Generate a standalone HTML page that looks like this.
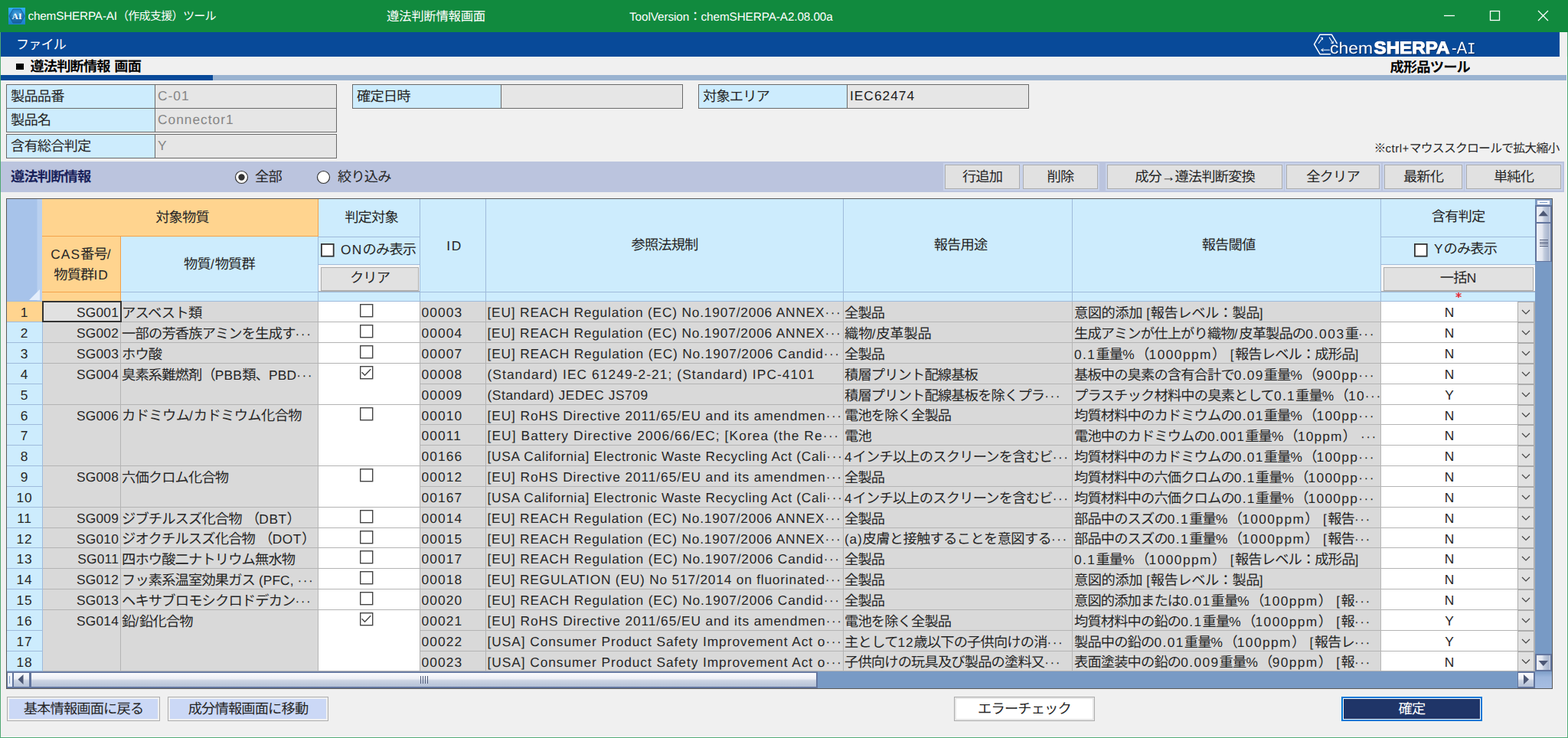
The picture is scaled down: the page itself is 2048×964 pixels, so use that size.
<!DOCTYPE html>
<html lang="ja"><head><meta charset="utf-8"><title>chemSHERPA-AI</title>
<style>
html,body{margin:0;padding:0;}
body{width:2048px;height:964px;overflow:hidden;position:relative;background:#f0f0f0;text-rendering:geometricPrecision;
 font-family:"Liberation Sans","Noto Sans CJK JP",sans-serif;font-size:17.33px;color:#262626;}
div{position:absolute;box-sizing:border-box;white-space:nowrap;overflow:hidden;}
svg{position:absolute;overflow:visible;}
.t{font-size:17.33px;}
.c{text-align:center;}
.r{text-align:right;}
.b{font-weight:bold;}
.el{letter-spacing:1.5px;}
.j{position:relative;display:inline-block;font-family:"Liberation Sans","Noto Sans CJK JP",sans-serif;font-size:18.3px;letter-spacing:-0.049em;text-align:justify;text-align-last:justify;white-space:nowrap;}
.lat{letter-spacing:0.75px;}
.btn{background:#e1e1e1;border:1px solid #adadad;text-align:center;}
.lbl{background:#cdecfd;border:1px solid #6a6a6a;padding-left:5px;font-size:17.33px;}
.val{background:#e6e6e6;border:1px solid #6a6a6a;padding-left:3px;font-size:17.33px;color:#7a7a7a;}
.cb{background:#fff;border:1px solid #4a4a4a;}
.dd{background:#e1e1e1;border:1px solid #adadad;}
</style></head><body>

<div style="left:0px;top:0px;width:2048px;height:42px;background:#118a3e;"></div>
<svg style="left:11px;top:10px" width="22" height="22" viewBox="0 0 22 22">
<defs><linearGradient id="ig" x1="0" y1="0" x2="0" y2="1"><stop offset="0" stop-color="#2fb0f3"/><stop offset="1" stop-color="#1c7fcc"/></linearGradient>
<linearGradient id="ih" x1="0" y1="0" x2="0" y2="1"><stop offset="0" stop-color="#2c8fd3"/><stop offset="1" stop-color="#17619f"/></linearGradient></defs>
<rect width="22" height="22" fill="url(#ig)"/>
<polygon points="1,11 6,2 16,2 21,11 16,20 6,20" fill="url(#ih)" stroke="#175c97" stroke-width="1"/>
<polygon points="4,11 7.5,5 14.5,5 18,11" fill="#4aa6e2" opacity="0.55"/>
<text x="11" y="15" font-family="Liberation Serif" font-weight="bold" font-size="11" fill="#fff" text-anchor="middle" textLength="13" lengthAdjust="spacingAndGlyphs">AI</text>
</svg>
<div class="t" style="left:36.5px;top:10px;width:420px;height:24px;line-height:24px;color:#fff;font-size:15.3px;"><span style="letter-spacing:-0.18px">chemSHERPA-AI</span><span class="j" style="width:129.0px;font-size:15.05px">（作成支援）ツール</span></div>
<div class="t" style="left:505px;top:10px;width:200px;height:24px;line-height:24px;color:#fff;font-size:15.6px;"><span class="j" style="width:128.5px;font-size:16.47px">遵法判断情報画面</span></div>
<div class="t" style="left:822px;top:10px;width:400px;height:24px;line-height:24px;color:#fff;font-size:15.3px;"><span style="letter-spacing:-0.09px">ToolVersion</span><span class="j" style="width:15.4px;font-size:16.16px">：</span><span style="letter-spacing:-0.09px">chemSHERPA-A2.08.00a</span></div>
<svg style="left:1880px;top:8px" width="150" height="26" viewBox="0 0 150 26" fill="none" stroke="#fff" stroke-width="1.3">
<path d="M6 12.5H20"/><rect x="66.5" y="6.5" width="12" height="12"/><path d="M129 6L142 19M142 6L129 19"/></svg>
<div style="left:1px;top:42px;width:2036px;height:32px;background:#084a99;"></div>
<div class="t" style="left:21px;top:45px;width:120px;height:26px;line-height:26px;color:#fff;"><span class="j" style="width:65.0px;font-size:17.06px">ファイル</span></div>
<svg style="left:1700px;top:40px" width="240" height="40" viewBox="1700 40 240 40">
<g fill="none" stroke="#fff" stroke-width="1.5" stroke-linejoin="round" stroke-linecap="round">
<path d="M1737.5 70.7H1724L1716.5 57.8L1724 45.2H1739.3L1746.2 56.6"/>
<path d="M1722.3 56.5L1727.5 49.5M1736.3 49L1741 56.5M1736.5 65.3H1726" stroke-width="1.1"/>
<path d="M1725.2 49.2L1727.6 49.3L1727.4 51.8M1741.3 54L1741.1 56.6L1738.6 56.2M1728.2 63.6L1725.8 65.3L1728.2 67" stroke-width="1"/>
</g>
<g fill="#fff" font-family="Liberation Sans" style="filter:drop-shadow(1px 1px 0.4px #082a60)">
<text x="1737" y="70" font-size="21" textLength="56" lengthAdjust="spacingAndGlyphs">chem</text>
<text x="1794.5" y="70" font-size="22.5" font-weight="bold" stroke="#fff" stroke-width="1.1" textLength="99" lengthAdjust="spacingAndGlyphs">SHERPA</text>
<text x="1896" y="70" font-size="22" textLength="31.5" lengthAdjust="spacingAndGlyphs">-A<tspan font-family="Liberation Mono" font-size="21">I</tspan></text></g>
</svg>
<div style="left:21px;top:83px;width:10px;height:8px;background:#000"></div>
<div class="t b" style="left:39.5px;top:74px;width:300px;height:25px;line-height:25px;color:#000;"><span class="j jb" style="width:104.2px;font-size:18.23px">遵法判断情報</span><span style="letter-spacing:0.80px"> </span><span class="j jb" style="width:34.7px;font-size:18.23px">画面</span></div>
<div class="t b r" style="left:1780px;top:75px;width:140px;height:25px;line-height:25px;color:#000;"><span class="j jb" style="width:104.5px">成形品ツール</span></div>
<div style="left:1px;top:98px;width:277px;height:7px;background:#084a99;"></div>
<div style="left:278px;top:98px;width:1769px;height:7px;background:#9ab3d0;"></div>
<div class="lbl" style="left:8px;top:110px;width:195px;height:32px;line-height:32px;line-height:29px;"><span class="j" style="width:69.6px">製品品番</span></div>
<div class="val" style="left:202px;top:110px;width:238px;height:32px;line-height:32px;color:#858585;line-height:29px;"><span style="letter-spacing:1.00px">C-01</span></div>
<div class="lbl" style="left:8px;top:141px;width:195px;height:32px;line-height:32px;line-height:29px;"><span class="j" style="width:52.2px">製品名</span></div>
<div class="val" style="left:202px;top:141px;width:238px;height:32px;line-height:32px;color:#858585;line-height:29px;"><span style="letter-spacing:1.00px">Connector1</span></div>
<div class="lbl" style="left:8px;top:175px;width:195px;height:32px;line-height:32px;line-height:29px;"><span class="j" style="width:104.4px">含有総合判定</span></div>
<div class="val" style="left:202px;top:175px;width:238px;height:32px;line-height:32px;color:#858585;line-height:29px;"><span style="letter-spacing:1.00px">Y</span></div>
<div class="lbl" style="left:460px;top:110px;width:195px;height:32px;line-height:32px;line-height:29px;"><span class="j" style="width:69.6px">確定日時</span></div>
<div class="val" style="left:654px;top:110px;width:238px;height:32px;line-height:32px;color:#858585;line-height:29px;"></div>
<div class="lbl" style="left:912px;top:110px;width:195px;height:32px;line-height:32px;line-height:29px;"><span class="j" style="width:87.0px">対象エリア</span></div>
<div class="val" style="left:1106px;top:110px;width:238px;height:32px;line-height:32px;color:#1c1c1c;line-height:29px;"><span style="letter-spacing:1.00px">IEC62474</span></div>
<div class="t r" style="left:1700px;top:184px;width:336.5px;height:22px;line-height:22px;font-size:15px;"><span class="j" style="width:15.1px;font-size:15.84px">※</span><span style="letter-spacing:0.48px">ctrl+</span><span class="j" style="width:195.8px;font-size:15.84px">マウススクロールで拡大縮小</span></div>
<div style="left:1px;top:211px;width:2042px;height:40px;background:#bbc4de;"></div>
<div class="t b" style="left:14px;top:218px;width:200px;height:25px;line-height:25px;color:#18215a;"><span class="j jb" style="width:104.4px">遵法判断情報</span></div>
<svg style="left:306px;top:222px" width="130" height="19" viewBox="0 0 130 19">
<circle cx="9.5" cy="9.5" r="8" fill="#fff" stroke="#333" stroke-width="1.2"/><circle cx="9.5" cy="9.5" r="4.2" fill="#333"/>
<circle cx="116.5" cy="9.5" r="8" fill="#fff" stroke="#333" stroke-width="1.2"/></svg>
<div class="t" style="left:333px;top:218px;width:60px;height:25px;line-height:25px;"><span class="j" style="width:34.8px">全部</span></div>
<div class="t" style="left:441px;top:218px;width:100px;height:25px;line-height:25px;"><span class="j" style="width:69.6px">絞り込み</span></div>
<div style="left:1232px;top:213px;width:102px;height:36px;background:#c9d3ea;"></div>
<div class="t btn" style="left:1234px;top:215px;width:98px;height:32px;line-height:32px;line-height:30px;"><span class="j" style="width:52.2px">行追加</span></div>
<div style="left:1334px;top:213px;width:102px;height:36px;background:#c9d3ea;"></div>
<div class="t btn" style="left:1336px;top:215px;width:98px;height:32px;line-height:32px;line-height:30px;"><span class="j" style="width:34.8px">削除</span></div>
<div style="left:1444px;top:213px;width:233px;height:36px;background:#c9d3ea;"></div>
<div class="t btn" style="left:1446px;top:215px;width:229px;height:32px;line-height:32px;line-height:30px;"><span class="j" style="width:156.6px">成分→遵法判断変換</span></div>
<div style="left:1678px;top:213px;width:126px;height:36px;background:#c9d3ea;"></div>
<div class="t btn" style="left:1680px;top:215px;width:122px;height:32px;line-height:32px;line-height:30px;"><span class="j" style="width:69.6px">全クリア</span></div>
<div style="left:1806px;top:213px;width:106px;height:36px;background:#c9d3ea;"></div>
<div class="t btn" style="left:1808px;top:215px;width:102px;height:32px;line-height:32px;line-height:30px;"><span class="j" style="width:52.2px">最新化</span></div>
<div style="left:1913px;top:213px;width:128px;height:36px;background:#c9d3ea;"></div>
<div class="t btn" style="left:1915px;top:215px;width:124px;height:32px;line-height:32px;line-height:30px;"><span class="j" style="width:52.2px">単純化</span></div>
<div style="left:8px;top:259px;width:2020px;height:641px;background:#7a9bc4;border:1px solid #5a5a5a;"></div>
<div style="left:9px;top:260px;width:1996px;height:134px;background:#cdecfd;"></div>
<div style="left:9px;top:260px;width:46px;height:134px;background:linear-gradient(90deg,#a7c3ea 0,#a7c3ea 39px,#b9d0ef 40px);"></div>
<svg style="left:38px;top:378px" width="14" height="14"><polygon points="14,0 14,14 0,14" fill="#e4eefb"/></svg>
<div style="left:55px;top:260px;width:361px;height:49px;background:#ffd48f;border-right:1px solid #f3a24a;border-bottom:1px solid #f3a24a;"></div>
<div style="left:55px;top:309px;width:103px;height:85px;background:#ffd48f;border-right:1px solid #f3a24a;"></div>
<div style="left:55px;top:381px;width:102px;height:1px;background:#f3a24a;"></div>
<div style="left:548px;top:260px;width:1px;height:134px;background:#9fbbdb;"></div>
<div style="left:634px;top:260px;width:1px;height:134px;background:#9fbbdb;"></div>
<div style="left:1101px;top:260px;width:1px;height:134px;background:#9fbbdb;"></div>
<div style="left:1400px;top:260px;width:1px;height:134px;background:#9fbbdb;"></div>
<div style="left:1803px;top:260px;width:1px;height:134px;background:#9fbbdb;"></div>
<div style="left:415px;top:309px;width:1px;height:85px;background:#9fbbdb;"></div>
<div style="left:158px;top:381px;width:1847px;height:1px;background:#9fbbdb;"></div>
<div style="left:9px;top:393px;width:1996px;height:1px;background:#9fbbdb;"></div>
<div style="left:416px;top:309px;width:132px;height:1px;background:#9fbbdb;"></div>
<div style="left:416px;top:345px;width:132px;height:1px;background:#9fbbdb;"></div>
<div style="left:1804px;top:309px;width:201px;height:1px;background:#9fbbdb;"></div>
<div style="left:1804px;top:345px;width:201px;height:1px;background:#9fbbdb;"></div>
<div class="t c" style="left:57px;top:270px;width:362px;height:28px;line-height:28px;"><span class="j" style="width:69.6px">対象物質</span></div>
<div class="t c" style="left:55px;top:318px;width:102px;height:28px;line-height:28px;"><span style="letter-spacing:1.00px">CAS</span><span class="j" style="width:34.8px">番号</span><span style="letter-spacing:1.00px">/</span></div>
<div class="t c" style="left:55px;top:345px;width:102px;height:28px;line-height:28px;"><span class="j" style="width:52.2px">物質群</span><span style="letter-spacing:1.00px">ID</span></div>
<div class="t c" style="left:158px;top:331px;width:257px;height:28px;line-height:28px;"><span class="j" style="width:34.8px">物質</span><span style="letter-spacing:1.00px">/</span><span class="j" style="width:52.2px">物質群</span></div>
<div class="t c" style="left:418px;top:270px;width:134px;height:28px;line-height:28px;"><span class="j" style="width:69.6px">判定対象</span></div>
<svg style="left:419.3px;top:318px" width="18" height="18" fill="#fff" stroke="#333" stroke-width="1.8"><rect x="0.9" y="0.9" width="15.8" height="15.8"/></svg>
<div class="t" style="left:445px;top:312px;width:103px;height:28px;line-height:28px;"><span style="letter-spacing:1.30px">ON</span><span class="j" style="width:69.6px">のみ表示</span></div>
<div style="left:416px;top:346px;width:132px;height:35px;background:#f6f6f6;border-bottom:1px solid #b0b0b0;"></div>
<div class="t btn" style="left:419px;top:349px;width:128px;height:31px;line-height:31px;line-height:25px;"><span class="j" style="width:52.2px">クリア</span></div>
<div class="t c" style="left:551px;top:307px;width:85px;height:28px;line-height:28px;letter-spacing:1.5px;">ID</div>
<div class="t c" style="left:635px;top:306px;width:466px;height:28px;line-height:28px;"><span class="j" style="width:87.0px">参照法規制</span></div>
<div class="t c" style="left:1104px;top:306px;width:301px;height:28px;line-height:28px;"><span class="j" style="width:69.6px">報告用途</span></div>
<div class="t c" style="left:1403px;top:306px;width:403px;height:28px;line-height:28px;"><span class="j" style="width:69.6px">報告閾値</span></div>
<div class="t c" style="left:1804px;top:269px;width:201px;height:28px;line-height:28px;"><span class="j" style="width:69.6px">含有判定</span></div>
<svg style="left:1847.3px;top:318px" width="18" height="18" fill="#fff" stroke="#333" stroke-width="1.8"><rect x="0.9" y="0.9" width="15.8" height="15.8"/></svg>
<div class="t" style="left:1873px;top:311px;width:120px;height:28px;line-height:28px;"><span style="letter-spacing:1.00px">Y</span><span class="j" style="width:69.6px">のみ表示</span></div>
<div style="left:1804px;top:346px;width:201px;height:35px;background:#f6f6f6;border-bottom:1px solid #b0b0b0;"></div>
<div class="t btn" style="left:1807px;top:349px;width:196px;height:31px;line-height:31px;line-height:25px;"><span class="j" style="width:34.8px">一括</span><span style="letter-spacing:1.00px">N</span></div>
<svg style="left:1900px;top:381px" width="10" height="9" viewBox="0 0 10 9" stroke="#e8202a" stroke-width="1.4"><path d="M5 1V8M1.5 2.5L8.5 6.5M8.5 2.5L1.5 6.5"/></svg>
<div style="left:9px;top:394px;width:46px;height:483px;background:#cdecfd;"></div>
<div style="left:55px;top:394px;width:360px;height:483px;background:#d9d9d9;"></div>
<div style="left:415px;top:394px;width:133px;height:483px;background:#fff;"></div>
<div style="left:548px;top:394px;width:1255px;height:483px;background:#d9d9d9;"></div>
<div style="left:1803px;top:394px;width:202px;height:483px;background:#fff;"></div>
<div style="left:9px;top:394px;width:47px;height:27px;background:#ffd48f;border-right:1px solid #f3a24a;"></div>
<div style="left:55px;top:421px;width:1px;height:456px;background:#9fbbdb;"></div>
<div style="left:157px;top:394px;width:1px;height:483px;background:#b4b4b4;"></div>
<div style="left:415px;top:394px;width:1px;height:483px;background:#b4b4b4;"></div>
<div style="left:548px;top:394px;width:1px;height:483px;background:#b4b4b4;"></div>
<div style="left:634px;top:394px;width:1px;height:483px;background:#b4b4b4;"></div>
<div style="left:1101px;top:394px;width:1px;height:483px;background:#b4b4b4;"></div>
<div style="left:1400px;top:394px;width:1px;height:483px;background:#b4b4b4;"></div>
<div style="left:1803px;top:394px;width:1px;height:483px;background:#b4b4b4;"></div>
<div style="left:2004px;top:394px;width:1px;height:483px;background:#b4b4b4;"></div>
<div style="left:9px;top:420px;width:46px;height:1px;background:#9fbbdb;"></div>
<div style="left:548px;top:420px;width:1457px;height:1px;background:#b4b4b4;"></div>
<div style="left:9px;top:447px;width:46px;height:1px;background:#9fbbdb;"></div>
<div style="left:548px;top:447px;width:1457px;height:1px;background:#b4b4b4;"></div>
<div style="left:9px;top:474px;width:46px;height:1px;background:#9fbbdb;"></div>
<div style="left:548px;top:474px;width:1457px;height:1px;background:#b4b4b4;"></div>
<div style="left:9px;top:501px;width:46px;height:1px;background:#9fbbdb;"></div>
<div style="left:548px;top:501px;width:1457px;height:1px;background:#b4b4b4;"></div>
<div style="left:9px;top:528px;width:46px;height:1px;background:#9fbbdb;"></div>
<div style="left:548px;top:528px;width:1457px;height:1px;background:#b4b4b4;"></div>
<div style="left:9px;top:554px;width:46px;height:1px;background:#9fbbdb;"></div>
<div style="left:548px;top:554px;width:1457px;height:1px;background:#b4b4b4;"></div>
<div style="left:9px;top:581px;width:46px;height:1px;background:#9fbbdb;"></div>
<div style="left:548px;top:581px;width:1457px;height:1px;background:#b4b4b4;"></div>
<div style="left:9px;top:608px;width:46px;height:1px;background:#9fbbdb;"></div>
<div style="left:548px;top:608px;width:1457px;height:1px;background:#b4b4b4;"></div>
<div style="left:9px;top:635px;width:46px;height:1px;background:#9fbbdb;"></div>
<div style="left:548px;top:635px;width:1457px;height:1px;background:#b4b4b4;"></div>
<div style="left:9px;top:662px;width:46px;height:1px;background:#9fbbdb;"></div>
<div style="left:548px;top:662px;width:1457px;height:1px;background:#b4b4b4;"></div>
<div style="left:9px;top:689px;width:46px;height:1px;background:#9fbbdb;"></div>
<div style="left:548px;top:689px;width:1457px;height:1px;background:#b4b4b4;"></div>
<div style="left:9px;top:715px;width:46px;height:1px;background:#9fbbdb;"></div>
<div style="left:548px;top:715px;width:1457px;height:1px;background:#b4b4b4;"></div>
<div style="left:9px;top:742px;width:46px;height:1px;background:#9fbbdb;"></div>
<div style="left:548px;top:742px;width:1457px;height:1px;background:#b4b4b4;"></div>
<div style="left:9px;top:769px;width:46px;height:1px;background:#9fbbdb;"></div>
<div style="left:548px;top:769px;width:1457px;height:1px;background:#b4b4b4;"></div>
<div style="left:9px;top:796px;width:46px;height:1px;background:#9fbbdb;"></div>
<div style="left:548px;top:796px;width:1457px;height:1px;background:#b4b4b4;"></div>
<div style="left:9px;top:823px;width:46px;height:1px;background:#9fbbdb;"></div>
<div style="left:548px;top:823px;width:1457px;height:1px;background:#b4b4b4;"></div>
<div style="left:9px;top:850px;width:46px;height:1px;background:#9fbbdb;"></div>
<div style="left:548px;top:850px;width:1457px;height:1px;background:#b4b4b4;"></div>
<div style="left:9px;top:876px;width:46px;height:1px;background:#9fbbdb;"></div>
<div style="left:548px;top:876px;width:1457px;height:1px;background:#b4b4b4;"></div>
<div style="left:56px;top:420px;width:492px;height:1px;background:#b4b4b4;"></div>
<div style="left:56px;top:447px;width:492px;height:1px;background:#b4b4b4;"></div>
<div style="left:56px;top:474px;width:492px;height:1px;background:#b4b4b4;"></div>
<div style="left:56px;top:528px;width:492px;height:1px;background:#b4b4b4;"></div>
<div style="left:56px;top:608px;width:492px;height:1px;background:#b4b4b4;"></div>
<div style="left:56px;top:662px;width:492px;height:1px;background:#b4b4b4;"></div>
<div style="left:56px;top:689px;width:492px;height:1px;background:#b4b4b4;"></div>
<div style="left:56px;top:715px;width:492px;height:1px;background:#b4b4b4;"></div>
<div style="left:56px;top:742px;width:492px;height:1px;background:#b4b4b4;"></div>
<div style="left:56px;top:769px;width:492px;height:1px;background:#b4b4b4;"></div>
<div style="left:56px;top:796px;width:492px;height:1px;background:#b4b4b4;"></div>
<div style="left:56px;top:876px;width:492px;height:1px;background:#b4b4b4;"></div>
<div class="t c" style="left:9px;top:395px;width:46px;height:27px;line-height:27px;letter-spacing:0.8px;">1</div>
<div class="t r" style="left:57px;top:395px;width:98px;height:27px;line-height:27px;"><span style="letter-spacing:0.21px">SG001</span></div>
<div class="t" style="left:159px;top:395px;width:255px;height:27px;line-height:27px;"><span class="j" style="width:104.4px">アスベスト類</span></div>
<svg style="left:470.4px;top:397px" width="18" height="18" fill="#fff" stroke="#454545" stroke-width="1.4"><rect x="0.7" y="0.7" width="16" height="16"/></svg>
<div class="t" style="left:550.5px;top:395px;width:82px;height:27px;line-height:27px;"><span style="letter-spacing:1.12px">00003</span></div>
<div class="t" style="left:636.5px;top:395px;width:464px;height:27px;line-height:27px;"><span style="letter-spacing:0.81px">[EU] REACH Regulation (EC) No.1907/2006 ANNEX</span><span class="el">···</span></div>
<div class="t" style="left:1103px;top:395px;width:296px;height:27px;line-height:27px;"><span class="j" style="width:52.2px">全製品</span></div>
<div class="t" style="left:1403px;top:395px;width:399px;height:27px;line-height:27px;"><span class="j" style="width:88.6px">意図的添加</span><span style="letter-spacing:0.80px"> [</span><span class="j" style="width:141.8px">報告レベル：製品</span><span style="letter-spacing:0.80px">]</span></div>
<div class="t c" style="left:1804px;top:395px;width:178px;height:27px;line-height:27px;">N</div>
<div class="dd" style="left:1982px;top:394px;width:22px;height:27px;"></div>
<svg style="left:1982px;top:394px" width="22" height="27" fill="none" stroke="#444" stroke-width="1.2"><path d="M6 11.0L11 16.0L16 11.0"/></svg>
<div class="t c" style="left:9px;top:422px;width:46px;height:27px;line-height:27px;letter-spacing:0.8px;">2</div>
<div class="t r" style="left:57px;top:422px;width:98px;height:27px;line-height:27px;"><span style="letter-spacing:0.21px">SG002</span></div>
<div class="t" style="left:159px;top:422px;width:255px;height:27px;line-height:27px;"><span class="j" style="width:226.6px">一部の芳香族アミンを生成す</span><span class="el">···</span></div>
<svg style="left:470.4px;top:424px" width="18" height="18" fill="#fff" stroke="#454545" stroke-width="1.4"><rect x="0.7" y="0.7" width="16" height="16"/></svg>
<div class="t" style="left:550.5px;top:422px;width:82px;height:27px;line-height:27px;"><span style="letter-spacing:1.12px">00004</span></div>
<div class="t" style="left:636.5px;top:422px;width:464px;height:27px;line-height:27px;"><span style="letter-spacing:0.81px">[EU] REACH Regulation (EC) No.1907/2006 ANNEX</span><span class="el">···</span></div>
<div class="t" style="left:1103px;top:422px;width:296px;height:27px;line-height:27px;"><span class="j" style="width:35.7px">織物</span><span style="letter-spacing:0.80px">/</span><span class="j" style="width:71.5px">皮革製品</span></div>
<div class="t" style="left:1403px;top:422px;width:399px;height:27px;line-height:27px;"><span class="j" style="width:208.8px">生成アミンが仕上がり織物</span><span style="letter-spacing:1.62px">/</span><span class="j" style="width:87.0px">皮革製品の</span><span style="letter-spacing:1.62px">0.003</span><span class="j" style="width:17.4px">重</span><span class="el">···</span></div>
<div class="t c" style="left:1804px;top:422px;width:178px;height:27px;line-height:27px;">N</div>
<div class="dd" style="left:1982px;top:421px;width:22px;height:27px;"></div>
<svg style="left:1982px;top:421px" width="22" height="27" fill="none" stroke="#444" stroke-width="1.2"><path d="M6 11.0L11 16.0L16 11.0"/></svg>
<div class="t c" style="left:9px;top:449px;width:46px;height:27px;line-height:27px;letter-spacing:0.8px;">3</div>
<div class="t r" style="left:57px;top:449px;width:98px;height:27px;line-height:27px;"><span style="letter-spacing:0.21px">SG003</span></div>
<div class="t" style="left:159px;top:449px;width:255px;height:27px;line-height:27px;"><span class="j" style="width:52.2px">ホウ酸</span></div>
<svg style="left:470.4px;top:451px" width="18" height="18" fill="#fff" stroke="#454545" stroke-width="1.4"><rect x="0.7" y="0.7" width="16" height="16"/></svg>
<div class="t" style="left:550.5px;top:449px;width:82px;height:27px;line-height:27px;"><span style="letter-spacing:1.12px">00007</span></div>
<div class="t" style="left:636.5px;top:449px;width:464px;height:27px;line-height:27px;"><span style="letter-spacing:0.84px">[EU] REACH Regulation (EC) No.1907/2006 Candid</span><span class="el">···</span></div>
<div class="t" style="left:1103px;top:449px;width:296px;height:27px;line-height:27px;"><span class="j" style="width:52.2px">全製品</span></div>
<div class="t" style="left:1403px;top:449px;width:399px;height:27px;line-height:27px;"><span style="letter-spacing:1.46px">0.1</span><span class="j" style="width:34.8px">重量</span><span style="letter-spacing:1.46px">%</span><span class="j" style="width:17.4px">（</span><span style="letter-spacing:1.46px">1000ppm</span><span class="j" style="width:17.4px">）</span><span style="letter-spacing:1.46px"> [</span><span class="j" style="width:156.6px">報告レベル：成形品</span><span style="letter-spacing:1.46px">]</span></div>
<div class="t c" style="left:1804px;top:449px;width:178px;height:27px;line-height:27px;">N</div>
<div class="dd" style="left:1982px;top:448px;width:22px;height:27px;"></div>
<svg style="left:1982px;top:448px" width="22" height="27" fill="none" stroke="#444" stroke-width="1.2"><path d="M6 11.0L11 16.0L16 11.0"/></svg>
<div class="t c" style="left:9px;top:476px;width:46px;height:27px;line-height:27px;letter-spacing:0.8px;">4</div>
<div class="t r" style="left:57px;top:476px;width:98px;height:27px;line-height:27px;"><span style="letter-spacing:0.21px">SG004</span></div>
<div class="t" style="left:159px;top:476px;width:255px;height:27px;line-height:27px;"><span class="j" style="width:121.8px">臭素系難燃剤（</span><span style="letter-spacing:0.22px">PBB</span><span class="j" style="width:34.8px">類、</span><span style="letter-spacing:0.22px">PBD</span><span class="el">···</span></div>
<svg style="left:470.4px;top:478px" width="18" height="18" fill="#fff" stroke="#454545" stroke-width="1.4"><rect x="0.7" y="0.7" width="16" height="16"/><path d="M2.6 8.2L6.5 12.3L14.2 4.2" fill="none"/></svg>
<div class="t" style="left:550.5px;top:476px;width:82px;height:27px;line-height:27px;"><span style="letter-spacing:1.12px">00008</span></div>
<div class="t" style="left:636.5px;top:476px;width:464px;height:27px;line-height:27px;"><span style="letter-spacing:1.08px">(Standard) IEC 61249-2-21; (Standard) IPC-4101</span></div>
<div class="t" style="left:1103px;top:476px;width:296px;height:27px;line-height:27px;"><span class="j" style="width:174.0px">積層プリント配線基板</span></div>
<div class="t" style="left:1403px;top:476px;width:399px;height:27px;line-height:27px;"><span class="j" style="width:208.8px">基板中の臭素の含有合計で</span><span style="letter-spacing:1.28px">0.09</span><span class="j" style="width:34.8px">重量</span><span style="letter-spacing:1.28px">%</span><span class="j" style="width:17.4px">（</span><span style="letter-spacing:1.28px">900pp</span><span class="el">···</span></div>
<div class="t c" style="left:1804px;top:476px;width:178px;height:27px;line-height:27px;">N</div>
<div class="dd" style="left:1982px;top:475px;width:22px;height:27px;"></div>
<svg style="left:1982px;top:475px" width="22" height="27" fill="none" stroke="#444" stroke-width="1.2"><path d="M6 11.0L11 16.0L16 11.0"/></svg>
<div class="t c" style="left:9px;top:503px;width:46px;height:27px;line-height:27px;letter-spacing:0.8px;">5</div>
<div class="t" style="left:550.5px;top:503px;width:82px;height:27px;line-height:27px;"><span style="letter-spacing:1.12px">00009</span></div>
<div class="t" style="left:636.5px;top:503px;width:464px;height:27px;line-height:27px;"><span style="letter-spacing:0.58px">(Standard) JEDEC JS709</span></div>
<div class="t" style="left:1103px;top:503px;width:296px;height:27px;line-height:27px;"><span class="j" style="width:261.2px">積層プリント配線基板を除くプラ</span><span class="el">···</span></div>
<div class="t" style="left:1403px;top:503px;width:399px;height:27px;line-height:27px;"><span class="j" style="width:261.0px">プラスチック材料中の臭素として</span><span style="letter-spacing:1.31px">0.1</span><span class="j" style="width:34.8px">重量</span><span style="letter-spacing:1.31px">%</span><span class="j" style="width:17.4px">（</span><span style="letter-spacing:1.31px">10</span><span class="el">···</span></div>
<div class="t c" style="left:1804px;top:503px;width:178px;height:27px;line-height:27px;">Y</div>
<div class="dd" style="left:1982px;top:502px;width:22px;height:27px;"></div>
<svg style="left:1982px;top:502px" width="22" height="27" fill="none" stroke="#444" stroke-width="1.2"><path d="M6 11.0L11 16.0L16 11.0"/></svg>
<div class="t c" style="left:9px;top:530px;width:46px;height:26px;line-height:26px;letter-spacing:0.8px;">6</div>
<div class="t r" style="left:57px;top:530px;width:98px;height:26px;line-height:26px;"><span style="letter-spacing:0.21px">SG006</span></div>
<div class="t" style="left:159px;top:530px;width:255px;height:26px;line-height:26px;"><span class="j" style="width:88.1px">カドミウム</span><span style="letter-spacing:0.80px">/</span><span class="j" style="width:141.0px">カドミウム化合物</span></div>
<svg style="left:470.4px;top:532px" width="18" height="18" fill="#fff" stroke="#454545" stroke-width="1.4"><rect x="0.7" y="0.7" width="16" height="16"/></svg>
<div class="t" style="left:550.5px;top:530px;width:82px;height:26px;line-height:26px;"><span style="letter-spacing:1.12px">00010</span></div>
<div class="t" style="left:636.5px;top:530px;width:464px;height:26px;line-height:26px;"><span style="letter-spacing:0.91px">[EU] RoHS Directive 2011/65/EU and its amendmen</span><span class="el">···</span></div>
<div class="t" style="left:1103px;top:530px;width:296px;height:26px;line-height:26px;"><span class="j" style="width:139.2px">電池を除く全製品</span></div>
<div class="t" style="left:1403px;top:530px;width:399px;height:26px;line-height:26px;"><span class="j" style="width:208.8px">均質材料中のカドミウムの</span><span style="letter-spacing:1.28px">0.01</span><span class="j" style="width:34.8px">重量</span><span style="letter-spacing:1.28px">%</span><span class="j" style="width:17.4px">（</span><span style="letter-spacing:1.28px">100pp</span><span class="el">···</span></div>
<div class="t c" style="left:1804px;top:530px;width:178px;height:26px;line-height:26px;">N</div>
<div class="dd" style="left:1982px;top:529px;width:22px;height:26px;"></div>
<svg style="left:1982px;top:529px" width="22" height="26" fill="none" stroke="#444" stroke-width="1.2"><path d="M6 10.5L11 15.5L16 10.5"/></svg>
<div class="t c" style="left:9px;top:556px;width:46px;height:27px;line-height:27px;letter-spacing:0.8px;">7</div>
<div class="t" style="left:550.5px;top:556px;width:82px;height:27px;line-height:27px;"><span style="letter-spacing:1.12px">00011</span></div>
<div class="t" style="left:636.5px;top:556px;width:464px;height:27px;line-height:27px;"><span style="letter-spacing:1.10px">[EU] Battery Directive 2006/66/EC; [Korea (the Re</span><span class="el">···</span></div>
<div class="t" style="left:1103px;top:556px;width:296px;height:27px;line-height:27px;"><span class="j" style="width:34.8px">電池</span></div>
<div class="t" style="left:1403px;top:556px;width:399px;height:27px;line-height:27px;"><span class="j" style="width:174.0px">電池中のカドミウムの</span><span style="letter-spacing:1.15px">0.001</span><span class="j" style="width:34.8px">重量</span><span style="letter-spacing:1.15px">%</span><span class="j" style="width:17.4px">（</span><span style="letter-spacing:1.15px">10ppm</span><span class="j" style="width:17.4px">）</span><span style="letter-spacing:1.15px"> </span><span class="el">···</span></div>
<div class="t c" style="left:1804px;top:556px;width:178px;height:27px;line-height:27px;">N</div>
<div class="dd" style="left:1982px;top:555px;width:22px;height:27px;"></div>
<svg style="left:1982px;top:555px" width="22" height="27" fill="none" stroke="#444" stroke-width="1.2"><path d="M6 11.0L11 16.0L16 11.0"/></svg>
<div class="t c" style="left:9px;top:583px;width:46px;height:27px;line-height:27px;letter-spacing:0.8px;">8</div>
<div class="t" style="left:550.5px;top:583px;width:82px;height:27px;line-height:27px;"><span style="letter-spacing:1.12px">00166</span></div>
<div class="t" style="left:636.5px;top:583px;width:464px;height:27px;line-height:27px;"><span style="letter-spacing:0.70px">[USA California] Electronic Waste Recycling Act (Cali</span><span class="el">···</span></div>
<div class="t" style="left:1103px;top:583px;width:296px;height:27px;line-height:27px;"><span style="letter-spacing:0.80px">4</span><span class="j" style="width:261.2px">インチ以上のスクリーンを含むビ</span><span class="el">···</span></div>
<div class="t" style="left:1403px;top:583px;width:399px;height:27px;line-height:27px;"><span class="j" style="width:208.8px">均質材料中のカドミウムの</span><span style="letter-spacing:1.28px">0.01</span><span class="j" style="width:34.8px">重量</span><span style="letter-spacing:1.28px">%</span><span class="j" style="width:17.4px">（</span><span style="letter-spacing:1.28px">100pp</span><span class="el">···</span></div>
<div class="t c" style="left:1804px;top:583px;width:178px;height:27px;line-height:27px;">N</div>
<div class="dd" style="left:1982px;top:582px;width:22px;height:27px;"></div>
<svg style="left:1982px;top:582px" width="22" height="27" fill="none" stroke="#444" stroke-width="1.2"><path d="M6 11.0L11 16.0L16 11.0"/></svg>
<div class="t c" style="left:9px;top:610px;width:46px;height:27px;line-height:27px;letter-spacing:0.8px;">9</div>
<div class="t r" style="left:57px;top:610px;width:98px;height:27px;line-height:27px;"><span style="letter-spacing:0.21px">SG008</span></div>
<div class="t" style="left:159px;top:610px;width:255px;height:27px;line-height:27px;"><span class="j" style="width:139.2px">六価クロム化合物</span></div>
<svg style="left:470.4px;top:612px" width="18" height="18" fill="#fff" stroke="#454545" stroke-width="1.4"><rect x="0.7" y="0.7" width="16" height="16"/></svg>
<div class="t" style="left:550.5px;top:610px;width:82px;height:27px;line-height:27px;"><span style="letter-spacing:1.12px">00012</span></div>
<div class="t" style="left:636.5px;top:610px;width:464px;height:27px;line-height:27px;"><span style="letter-spacing:0.91px">[EU] RoHS Directive 2011/65/EU and its amendmen</span><span class="el">···</span></div>
<div class="t" style="left:1103px;top:610px;width:296px;height:27px;line-height:27px;"><span class="j" style="width:52.2px">全製品</span></div>
<div class="t" style="left:1403px;top:610px;width:399px;height:27px;line-height:27px;"><span class="j" style="width:208.8px">均質材料中の六価クロムの</span><span style="letter-spacing:1.28px">0.1</span><span class="j" style="width:34.8px">重量</span><span style="letter-spacing:1.28px">%</span><span class="j" style="width:17.4px">（</span><span style="letter-spacing:1.28px">1000pp</span><span class="el">···</span></div>
<div class="t c" style="left:1804px;top:610px;width:178px;height:27px;line-height:27px;">N</div>
<div class="dd" style="left:1982px;top:609px;width:22px;height:27px;"></div>
<svg style="left:1982px;top:609px" width="22" height="27" fill="none" stroke="#444" stroke-width="1.2"><path d="M6 11.0L11 16.0L16 11.0"/></svg>
<div class="t c" style="left:9px;top:637px;width:46px;height:27px;line-height:27px;letter-spacing:0.8px;">10</div>
<div class="t" style="left:550.5px;top:637px;width:82px;height:27px;line-height:27px;"><span style="letter-spacing:1.12px">00167</span></div>
<div class="t" style="left:636.5px;top:637px;width:464px;height:27px;line-height:27px;"><span style="letter-spacing:0.70px">[USA California] Electronic Waste Recycling Act (Cali</span><span class="el">···</span></div>
<div class="t" style="left:1103px;top:637px;width:296px;height:27px;line-height:27px;"><span style="letter-spacing:0.80px">4</span><span class="j" style="width:261.2px">インチ以上のスクリーンを含むビ</span><span class="el">···</span></div>
<div class="t" style="left:1403px;top:637px;width:399px;height:27px;line-height:27px;"><span class="j" style="width:208.8px">均質材料中の六価クロムの</span><span style="letter-spacing:1.28px">0.1</span><span class="j" style="width:34.8px">重量</span><span style="letter-spacing:1.28px">%</span><span class="j" style="width:17.4px">（</span><span style="letter-spacing:1.28px">1000pp</span><span class="el">···</span></div>
<div class="t c" style="left:1804px;top:637px;width:178px;height:27px;line-height:27px;">N</div>
<div class="dd" style="left:1982px;top:636px;width:22px;height:27px;"></div>
<svg style="left:1982px;top:636px" width="22" height="27" fill="none" stroke="#444" stroke-width="1.2"><path d="M6 11.0L11 16.0L16 11.0"/></svg>
<div class="t c" style="left:9px;top:664px;width:46px;height:27px;line-height:27px;letter-spacing:0.8px;">11</div>
<div class="t r" style="left:57px;top:664px;width:98px;height:27px;line-height:27px;"><span style="letter-spacing:0.21px">SG009</span></div>
<div class="t" style="left:159px;top:664px;width:255px;height:27px;line-height:27px;"><span class="j" style="width:156.6px">ジブチルスズ化合物</span><span style="letter-spacing:0.53px"> </span><span class="j" style="width:17.4px">（</span><span style="letter-spacing:0.53px">DBT</span><span class="j" style="width:17.4px">）</span></div>
<svg style="left:470.4px;top:666px" width="18" height="18" fill="#fff" stroke="#454545" stroke-width="1.4"><rect x="0.7" y="0.7" width="16" height="16"/></svg>
<div class="t" style="left:550.5px;top:664px;width:82px;height:27px;line-height:27px;"><span style="letter-spacing:1.12px">00014</span></div>
<div class="t" style="left:636.5px;top:664px;width:464px;height:27px;line-height:27px;"><span style="letter-spacing:0.81px">[EU] REACH Regulation (EC) No.1907/2006 ANNEX</span><span class="el">···</span></div>
<div class="t" style="left:1103px;top:664px;width:296px;height:27px;line-height:27px;"><span class="j" style="width:52.2px">全製品</span></div>
<div class="t" style="left:1403px;top:664px;width:399px;height:27px;line-height:27px;"><span class="j" style="width:121.8px">部品中のスズの</span><span style="letter-spacing:1.41px">0.1</span><span class="j" style="width:34.8px">重量</span><span style="letter-spacing:1.41px">%</span><span class="j" style="width:17.4px">（</span><span style="letter-spacing:1.41px">1000ppm</span><span class="j" style="width:17.4px">）</span><span style="letter-spacing:1.41px"> [</span><span class="j" style="width:34.8px">報告</span><span class="el">···</span></div>
<div class="t c" style="left:1804px;top:664px;width:178px;height:27px;line-height:27px;">N</div>
<div class="dd" style="left:1982px;top:663px;width:22px;height:27px;"></div>
<svg style="left:1982px;top:663px" width="22" height="27" fill="none" stroke="#444" stroke-width="1.2"><path d="M6 11.0L11 16.0L16 11.0"/></svg>
<div class="t c" style="left:9px;top:691px;width:46px;height:26px;line-height:26px;letter-spacing:0.8px;">12</div>
<div class="t r" style="left:57px;top:691px;width:98px;height:26px;line-height:26px;"><span style="letter-spacing:0.21px">SG010</span></div>
<div class="t" style="left:159px;top:691px;width:255px;height:26px;line-height:26px;"><span class="j" style="width:174.0px">ジオクチルスズ化合物</span><span style="letter-spacing:0.53px"> </span><span class="j" style="width:17.4px">（</span><span style="letter-spacing:0.53px">DOT</span><span class="j" style="width:17.4px">）</span></div>
<svg style="left:470.4px;top:693px" width="18" height="18" fill="#fff" stroke="#454545" stroke-width="1.4"><rect x="0.7" y="0.7" width="16" height="16"/></svg>
<div class="t" style="left:550.5px;top:691px;width:82px;height:26px;line-height:26px;"><span style="letter-spacing:1.12px">00015</span></div>
<div class="t" style="left:636.5px;top:691px;width:464px;height:26px;line-height:26px;"><span style="letter-spacing:0.81px">[EU] REACH Regulation (EC) No.1907/2006 ANNEX</span><span class="el">···</span></div>
<div class="t" style="left:1103px;top:691px;width:296px;height:26px;line-height:26px;"><span style="letter-spacing:0.80px">(a)</span><span class="j" style="width:246.3px">皮膚と接触することを意図する</span><span class="el">···</span></div>
<div class="t" style="left:1403px;top:691px;width:399px;height:26px;line-height:26px;"><span class="j" style="width:121.8px">部品中のスズの</span><span style="letter-spacing:1.41px">0.1</span><span class="j" style="width:34.8px">重量</span><span style="letter-spacing:1.41px">%</span><span class="j" style="width:17.4px">（</span><span style="letter-spacing:1.41px">1000ppm</span><span class="j" style="width:17.4px">）</span><span style="letter-spacing:1.41px"> [</span><span class="j" style="width:34.8px">報告</span><span class="el">···</span></div>
<div class="t c" style="left:1804px;top:691px;width:178px;height:26px;line-height:26px;">N</div>
<div class="dd" style="left:1982px;top:690px;width:22px;height:26px;"></div>
<svg style="left:1982px;top:690px" width="22" height="26" fill="none" stroke="#444" stroke-width="1.2"><path d="M6 10.5L11 15.5L16 10.5"/></svg>
<div class="t c" style="left:9px;top:717px;width:46px;height:27px;line-height:27px;letter-spacing:0.8px;">13</div>
<div class="t r" style="left:57px;top:717px;width:98px;height:27px;line-height:27px;"><span style="letter-spacing:0.21px">SG011</span></div>
<div class="t" style="left:159px;top:717px;width:255px;height:27px;line-height:27px;"><span class="j" style="width:226.2px">四ホウ酸二ナトリウム無水物</span></div>
<svg style="left:470.4px;top:719px" width="18" height="18" fill="#fff" stroke="#454545" stroke-width="1.4"><rect x="0.7" y="0.7" width="16" height="16"/></svg>
<div class="t" style="left:550.5px;top:717px;width:82px;height:27px;line-height:27px;"><span style="letter-spacing:1.12px">00017</span></div>
<div class="t" style="left:636.5px;top:717px;width:464px;height:27px;line-height:27px;"><span style="letter-spacing:0.84px">[EU] REACH Regulation (EC) No.1907/2006 Candid</span><span class="el">···</span></div>
<div class="t" style="left:1103px;top:717px;width:296px;height:27px;line-height:27px;"><span class="j" style="width:52.2px">全製品</span></div>
<div class="t" style="left:1403px;top:717px;width:399px;height:27px;line-height:27px;"><span style="letter-spacing:1.46px">0.1</span><span class="j" style="width:34.8px">重量</span><span style="letter-spacing:1.46px">%</span><span class="j" style="width:17.4px">（</span><span style="letter-spacing:1.46px">1000ppm</span><span class="j" style="width:17.4px">）</span><span style="letter-spacing:1.46px"> [</span><span class="j" style="width:156.6px">報告レベル：成形品</span><span style="letter-spacing:1.46px">]</span></div>
<div class="t c" style="left:1804px;top:717px;width:178px;height:27px;line-height:27px;">N</div>
<div class="dd" style="left:1982px;top:716px;width:22px;height:27px;"></div>
<svg style="left:1982px;top:716px" width="22" height="27" fill="none" stroke="#444" stroke-width="1.2"><path d="M6 11.0L11 16.0L16 11.0"/></svg>
<div class="t c" style="left:9px;top:744px;width:46px;height:27px;line-height:27px;letter-spacing:0.8px;">14</div>
<div class="t r" style="left:57px;top:744px;width:98px;height:27px;line-height:27px;"><span style="letter-spacing:0.21px">SG012</span></div>
<div class="t" style="left:159px;top:744px;width:255px;height:27px;line-height:27px;"><span class="j" style="width:174.0px">フッ素系温室効果ガス</span><span style="letter-spacing:0.09px"> (PFC, </span><span class="el">···</span></div>
<svg style="left:470.4px;top:746px" width="18" height="18" fill="#fff" stroke="#454545" stroke-width="1.4"><rect x="0.7" y="0.7" width="16" height="16"/></svg>
<div class="t" style="left:550.5px;top:744px;width:82px;height:27px;line-height:27px;"><span style="letter-spacing:1.12px">00018</span></div>
<div class="t" style="left:636.5px;top:744px;width:464px;height:27px;line-height:27px;"><span style="letter-spacing:0.79px">[EU] REGULATION (EU) No 517/2014 on fluorinated</span><span class="el">···</span></div>
<div class="t" style="left:1103px;top:744px;width:296px;height:27px;line-height:27px;"><span class="j" style="width:52.2px">全製品</span></div>
<div class="t" style="left:1403px;top:744px;width:399px;height:27px;line-height:27px;"><span class="j" style="width:88.6px">意図的添加</span><span style="letter-spacing:0.80px"> [</span><span class="j" style="width:141.8px">報告レベル：製品</span><span style="letter-spacing:0.80px">]</span></div>
<div class="t c" style="left:1804px;top:744px;width:178px;height:27px;line-height:27px;">N</div>
<div class="dd" style="left:1982px;top:743px;width:22px;height:27px;"></div>
<svg style="left:1982px;top:743px" width="22" height="27" fill="none" stroke="#444" stroke-width="1.2"><path d="M6 11.0L11 16.0L16 11.0"/></svg>
<div class="t c" style="left:9px;top:771px;width:46px;height:27px;line-height:27px;letter-spacing:0.8px;">15</div>
<div class="t r" style="left:57px;top:771px;width:98px;height:27px;line-height:27px;"><span style="letter-spacing:0.21px">SG013</span></div>
<div class="t" style="left:159px;top:771px;width:255px;height:27px;line-height:27px;"><span class="j" style="width:226.5px">ヘキサブロモシクロドデカン</span><span class="el">···</span></div>
<svg style="left:470.4px;top:773px" width="18" height="18" fill="#fff" stroke="#454545" stroke-width="1.4"><rect x="0.7" y="0.7" width="16" height="16"/></svg>
<div class="t" style="left:550.5px;top:771px;width:82px;height:27px;line-height:27px;"><span style="letter-spacing:1.12px">00020</span></div>
<div class="t" style="left:636.5px;top:771px;width:464px;height:27px;line-height:27px;"><span style="letter-spacing:0.84px">[EU] REACH Regulation (EC) No.1907/2006 Candid</span><span class="el">···</span></div>
<div class="t" style="left:1103px;top:771px;width:296px;height:27px;line-height:27px;"><span class="j" style="width:52.2px">全製品</span></div>
<div class="t" style="left:1403px;top:771px;width:399px;height:27px;line-height:27px;"><span class="j" style="width:139.2px">意図的添加または</span><span style="letter-spacing:1.41px">0.01</span><span class="j" style="width:34.8px">重量</span><span style="letter-spacing:1.41px">%</span><span class="j" style="width:17.4px">（</span><span style="letter-spacing:1.41px">100ppm</span><span class="j" style="width:17.4px">）</span><span style="letter-spacing:1.41px"> [</span><span class="j" style="width:17.4px">報</span><span class="el">···</span></div>
<div class="t c" style="left:1804px;top:771px;width:178px;height:27px;line-height:27px;">N</div>
<div class="dd" style="left:1982px;top:770px;width:22px;height:27px;"></div>
<svg style="left:1982px;top:770px" width="22" height="27" fill="none" stroke="#444" stroke-width="1.2"><path d="M6 11.0L11 16.0L16 11.0"/></svg>
<div class="t c" style="left:9px;top:798px;width:46px;height:27px;line-height:27px;letter-spacing:0.8px;">16</div>
<div class="t r" style="left:57px;top:798px;width:98px;height:27px;line-height:27px;"><span style="letter-spacing:0.21px">SG014</span></div>
<div class="t" style="left:159px;top:798px;width:255px;height:27px;line-height:27px;"><span class="j" style="width:17.4px">鉛</span><span style="letter-spacing:0.85px">/</span><span class="j" style="width:69.6px">鉛化合物</span></div>
<svg style="left:470.4px;top:800px" width="18" height="18" fill="#fff" stroke="#454545" stroke-width="1.4"><rect x="0.7" y="0.7" width="16" height="16"/><path d="M2.6 8.2L6.5 12.3L14.2 4.2" fill="none"/></svg>
<div class="t" style="left:550.5px;top:798px;width:82px;height:27px;line-height:27px;"><span style="letter-spacing:1.12px">00021</span></div>
<div class="t" style="left:636.5px;top:798px;width:464px;height:27px;line-height:27px;"><span style="letter-spacing:0.91px">[EU] RoHS Directive 2011/65/EU and its amendmen</span><span class="el">···</span></div>
<div class="t" style="left:1103px;top:798px;width:296px;height:27px;line-height:27px;"><span class="j" style="width:139.2px">電池を除く全製品</span></div>
<div class="t" style="left:1403px;top:798px;width:399px;height:27px;line-height:27px;"><span class="j" style="width:139.2px">均質材料中の鉛の</span><span style="letter-spacing:1.41px">0.1</span><span class="j" style="width:34.8px">重量</span><span style="letter-spacing:1.41px">%</span><span class="j" style="width:17.4px">（</span><span style="letter-spacing:1.41px">1000ppm</span><span class="j" style="width:17.4px">）</span><span style="letter-spacing:1.41px"> [</span><span class="j" style="width:17.4px">報</span><span class="el">···</span></div>
<div class="t c" style="left:1804px;top:798px;width:178px;height:27px;line-height:27px;">Y</div>
<div class="dd" style="left:1982px;top:797px;width:22px;height:27px;"></div>
<svg style="left:1982px;top:797px" width="22" height="27" fill="none" stroke="#444" stroke-width="1.2"><path d="M6 11.0L11 16.0L16 11.0"/></svg>
<div class="t c" style="left:9px;top:825px;width:46px;height:27px;line-height:27px;letter-spacing:0.8px;">17</div>
<div class="t" style="left:550.5px;top:825px;width:82px;height:27px;line-height:27px;"><span style="letter-spacing:1.12px">00022</span></div>
<div class="t" style="left:636.5px;top:825px;width:464px;height:27px;line-height:27px;"><span style="letter-spacing:0.94px">[USA] Consumer Product Safety Improvement Act o</span><span class="el">···</span></div>
<div class="t" style="left:1103px;top:825px;width:296px;height:27px;line-height:27px;"><span class="j" style="width:69.6px;font-size:18.28px">主として</span><span style="letter-spacing:0.80px">12</span><span class="j" style="width:174.1px;font-size:18.28px">歳以下の子供向けの消</span><span class="el">···</span></div>
<div class="t" style="left:1403px;top:825px;width:399px;height:27px;line-height:27px;"><span class="j" style="width:104.4px">製品中の鉛の</span><span style="letter-spacing:1.41px">0.01</span><span class="j" style="width:34.8px">重量</span><span style="letter-spacing:1.41px">%</span><span class="j" style="width:17.4px">（</span><span style="letter-spacing:1.41px">100ppm</span><span class="j" style="width:17.4px">）</span><span style="letter-spacing:1.41px"> [</span><span class="j" style="width:52.2px">報告レ</span><span class="el">···</span></div>
<div class="t c" style="left:1804px;top:825px;width:178px;height:27px;line-height:27px;">Y</div>
<div class="dd" style="left:1982px;top:824px;width:22px;height:27px;"></div>
<svg style="left:1982px;top:824px" width="22" height="27" fill="none" stroke="#444" stroke-width="1.2"><path d="M6 11.0L11 16.0L16 11.0"/></svg>
<div class="t c" style="left:9px;top:852px;width:46px;height:26px;line-height:26px;letter-spacing:0.8px;">18</div>
<div class="t" style="left:550.5px;top:852px;width:82px;height:26px;line-height:26px;"><span style="letter-spacing:1.12px">00023</span></div>
<div class="t" style="left:636.5px;top:852px;width:464px;height:26px;line-height:26px;"><span style="letter-spacing:0.94px">[USA] Consumer Product Safety Improvement Act o</span><span class="el">···</span></div>
<div class="t" style="left:1103px;top:852px;width:296px;height:26px;line-height:26px;"><span class="j" style="width:261.2px">子供向けの玩具及び製品の塗料又</span><span class="el">···</span></div>
<div class="t" style="left:1403px;top:852px;width:399px;height:26px;line-height:26px;"><span class="j" style="width:139.2px">表面塗装中の鉛の</span><span style="letter-spacing:1.41px">0.009</span><span class="j" style="width:34.8px">重量</span><span style="letter-spacing:1.41px">%</span><span class="j" style="width:17.4px">（</span><span style="letter-spacing:1.41px">90ppm</span><span class="j" style="width:17.4px">）</span><span style="letter-spacing:1.41px"> [</span><span class="j" style="width:17.4px">報</span><span class="el">···</span></div>
<div class="t c" style="left:1804px;top:852px;width:178px;height:26px;line-height:26px;">N</div>
<div class="dd" style="left:1982px;top:851px;width:22px;height:26px;"></div>
<svg style="left:1982px;top:851px" width="22" height="26" fill="none" stroke="#444" stroke-width="1.2"><path d="M6 10.5L11 15.5L16 10.5"/></svg>
<div style="left:55px;top:393px;width:104px;height:28px;background:#e1e1e1;border:2px solid #333;"></div>
<div class="t r" style="left:57px;top:395px;width:98px;height:27px;line-height:27px;"><span style="letter-spacing:0.21px">SG001</span></div>
<div style="left:2005px;top:260px;width:22px;height:617px;background:#789ac5;"></div>
<div style="left:2007px;top:261px;width:18px;height:7px;background:#f3f6fc;border:1px solid #8ea0c4;"></div>
<div style="left:2011px;top:264px;width:10px;height:1px;background:#7f9cc6;"></div>
<div style="left:2005px;top:268px;width:22px;height:74px;background:#62759e;"></div>
<div style="left:2007px;top:270px;width:18px;height:20px;background:linear-gradient(90deg,#eef0f6 0,#e3e7f0 40%,#c3ccdd 55%,#a9b6ce 85%,#c9d1e1 100%);"></div>
<svg style="left:2007px;top:270px" width="18" height="20"><polygon points="2.5,12.2 15,12.2 8.8,5" fill="#4d5875"/></svg>
<div style="left:2007px;top:292px;width:18px;height:49px;background:linear-gradient(90deg,#eef0f6 0,#e3e7f0 40%,#c3ccdd 55%,#a9b6ce 85%,#c9d1e1 100%);"></div>
<div style="left:2011px;top:313px;width:11px;height:1px;background:#4f5a78;"></div>
<div style="left:2011px;top:316px;width:11px;height:1px;background:#4f5a78;"></div>
<div style="left:2011px;top:318px;width:11px;height:1px;background:#4f5a78;"></div>
<div style="left:2011px;top:321px;width:11px;height:1px;background:#4f5a78;"></div>
<div style="left:2005px;top:854px;width:22px;height:23px;background:#62759e;"></div>
<div style="left:2007px;top:856px;width:18px;height:19px;background:linear-gradient(90deg,#eef0f6 0,#e3e7f0 40%,#c3ccdd 55%,#a9b6ce 85%,#c9d1e1 100%);"></div>
<svg style="left:2007px;top:856px" width="18" height="19"><polygon points="2.5,7 15,7 8.8,14" fill="#4d5875"/></svg>
<div style="left:9px;top:877px;width:1996px;height:22px;background:#789ac5;"></div>
<div style="left:9px;top:877px;width:1059px;height:22px;background:#62759e;border-top:1px solid #7486ad;"></div>
<div style="left:10px;top:879px;width:6px;height:18px;background:linear-gradient(#f7f9fd,#dfe7f5);"></div>
<div style="left:12px;top:883px;width:1px;height:10px;background:#7f9cc6;"></div>
<div style="left:18px;top:879px;width:20px;height:18px;background:linear-gradient(#fbfbfd 0,#eceef5 42%,#ccd4e3 55%,#b4c1d7 100%);"></div>
<svg style="left:18px;top:879px" width="20" height="18"><polygon points="12.5,2 12.5,15 5.5,8.5" fill="#4d5875"/></svg>
<div style="left:41px;top:879px;width:1025px;height:18px;background:linear-gradient(#fbfbfd 0,#eceef5 42%,#ccd4e3 55%,#b4c1d7 100%);"></div>
<div style="left:549px;top:883px;width:1px;height:10px;background:#4f5a78;"></div>
<div style="left:552px;top:883px;width:1px;height:10px;background:#4f5a78;"></div>
<div style="left:555px;top:883px;width:1px;height:10px;background:#4f5a78;"></div>
<div style="left:558px;top:883px;width:1px;height:10px;background:#4f5a78;"></div>
<div style="left:1982px;top:877px;width:23px;height:22px;background:#62759e;"></div>
<div style="left:1983px;top:879px;width:20px;height:18px;background:linear-gradient(#fbfbfd 0,#eceef5 42%,#ccd4e3 55%,#b4c1d7 100%);"></div>
<svg style="left:1983px;top:879px" width="20" height="18"><polygon points="7,2 7,15 14,8.5" fill="#4d5875"/></svg>
<div style="left:2005px;top:877px;width:22px;height:22px;background:linear-gradient(#7d9ec8 0,#9db6dc 35%,#a7bee2 100%);"></div>
<div style="left:9px;top:910px;width:200px;height:32px;background:#f0f0f0;border:1px solid #adadad;"></div>
<div class="t c" style="left:12px;top:913px;width:194px;height:26px;line-height:26px;background:#cbd8f6;"><span class="j" style="width:156.6px">基本情報画面に戻る</span></div>
<div style="left:219px;top:910px;width:210px;height:32px;background:#f0f0f0;border:1px solid #adadad;"></div>
<div class="t c" style="left:222px;top:913px;width:204px;height:26px;line-height:26px;background:#cbd8f6;"><span class="j" style="width:156.6px">成分情報画面に移動</span></div>
<div class="t c" style="left:1246px;top:910px;width:184px;height:32px;line-height:32px;background:#fff;border:1px solid #adadad;box-shadow:inset 0 0 0 2px #e6e6e6;line-height:30px;"><span class="j" style="width:121.8px">エラーチェック</span></div>
<div style="left:1752px;top:910px;width:184px;height:32px;background:#fff;border:2px solid #0078d7;"></div>
<div class="t c" style="left:1755px;top:913px;width:178px;height:26px;line-height:26px;background:#1f3568;color:#fff;"><span class="j" style="width:34.8px">確定</span></div>
<div style="left:0px;top:42px;width:1px;height:922px;background:#4fa873;"></div>
<div style="left:2046px;top:74px;width:1px;height:889px;background:#fafafa;"></div>
<div style="left:1px;top:962px;width:2046px;height:1px;background:#fafafa;"></div>
<div style="left:2047px;top:42px;width:1px;height:922px;background:#4fa873;"></div>
<div style="left:0px;top:963px;width:2048px;height:1px;background:#4fa873;"></div>
</body></html>
